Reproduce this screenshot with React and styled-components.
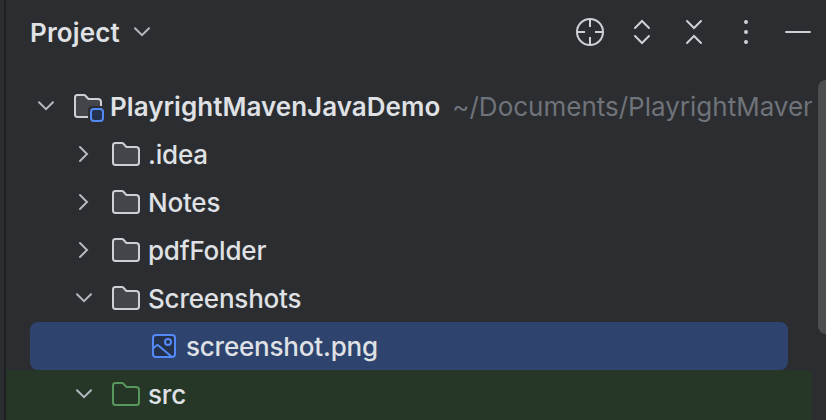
import styled, { createGlobalStyle } from "styled-components";

const GlobalStyle = createGlobalStyle`
  * {
    box-sizing: border-box;
  }
  body {
    margin: 0;
    background: #2b2d30;
    overflow: hidden;
  }
`;

const Window = styled.div`
  display: flex;
  width: 826px;
  height: 420px;
  overflow: hidden;
  background: #2b2d30;
  color: #dfe1e5;
  font-family: Inter, "Liberation Sans", sans-serif;
  font-size: 26px;
  line-height: 46px;
  white-space: nowrap;
`;

const Divider = styled.div`
  flex: none;
  width: 6px;
  border-left: 4px solid #2b2d30;
  background: #1e1f22;
`;

const ToolWindow = styled.div`
  flex: none;
  width: 820px;
`;

const Header = styled.div`
  display: flex;
  align-items: center;
  justify-content: space-between;
  height: 64px;
  padding: 0 12px 0 24px;
`;

const Title = styled.div`
  display: flex;
  align-items: center;
  gap: 6px;
  font-weight: 600;
  letter-spacing: 0.12px;

  span {
    padding-top: 2px;
  }
`;

const Toolbar = styled.div`
  display: flex;
  gap: 20px;
`;

const Content = styled.div`
  display: flex;
  padding-top: 16px;
`;

const Tree = styled.div`
  flex: none;
  width: 806px;
  margin-right: 6px;
  padding-top: 2px;
  overflow: hidden;
`;

const Row = styled.div`
  display: flex;
  align-items: center;
  height: 48px;
  padding-left: ${({ $level }) => 24 + $level * 38}px;
  background: ${({ $generated }) => ($generated ? "#263728" : "transparent")};
`;

const SelectedRow = styled(Row)`
  margin: 0 24px;
  padding-left: 118px;
  border-radius: 8px;
  background: #2e436e;
`;

const Label = styled.span`
  margin-left: 6px;
  padding-top: 2px;
  font-weight: ${({ $bold }) => ($bold ? 600 : 450)};
  letter-spacing: ${({ $bold }) => ($bold ? "0.03px" : "-0.2px")};
`;

const Location = styled.span`
  margin-left: 12px;
  padding-top: 2px;
  color: #6f737a;
`;

const Scrollbar = styled.div`
  flex: none;
  width: 16px;
  height: 254px;
  border-radius: 8px;
  background: #4c4d4f;
`;

const Icon = styled.svg`
  flex: none;
  width: 32px;
  height: 32px;
  fill: none;
  stroke: ${({ $color }) => $color || "#ced0d6"};
`;

const Arrow = styled(Icon)`
  margin-right: ${({ $gap }) => $gap || 0}px;
`;

const Badge = styled.rect`
  fill: #25324d;
  stroke: #548af7;
`;

const FOLDER =
  "M8.106 4.346L8.253 4.5H13C13.828 4.5 14.5 5.172 14.5 6V12.133C14.5 12.953 13.932 13.5 13.367 13.5H2.633C2.068 13.5 1.5 12.953 1.5 12.133V3.867C1.5 3.047 2.068 2.5 2.633 2.5H6.122C6.258 2.5 6.388 2.556 6.483 2.654L8.106 4.346Z";

const Chevron = ({ open, gap }) => (
  <Arrow viewBox="0 0 16 16" $gap={gap} $color="#b4b8bf">
    <path d={open ? "M4.5 6.1L8 9.6L11.5 6.1" : "M6 11.5L9.5 8L6 4.5"} strokeLinecap="round" />
  </Arrow>
);

const FolderIcon = ({ fill = "#43454a", stroke }) => (
  <Icon viewBox="0 0 16 16" $color={stroke}>
    <path d={FOLDER} fill={fill} />
  </Icon>
);

const ModuleIcon = () => (
  <Icon viewBox="0 0 16 16">
    <clipPath id="module-cut">
      <path d="M0 0H16V8H10C8.9 8 8 8.9 8 10V16H0Z" />
    </clipPath>
    <path d={FOLDER} fill="#43454a" clipPath="url(#module-cut)" />
    <Badge x="9.5" y="9.5" width="6" height="6" rx="1.5" />
  </Icon>
);

const ImageIcon = () => (
  <Icon viewBox="0 0 16 16" $color="#548af7">
    <rect x="2.5" y="2.5" width="11" height="11" rx="1.5" fill="#25324d" />
    <circle cx="10" cy="6" r="1.5" />
    <path d="M2.5 9.2L4.2 7.7C4.5 7.45 4.9 7.45 5.2 7.7L12 13.5" />
  </Icon>
);

const folders = [".idea", "Notes", "pdfFolder"];

const App = () => {
  return (
    <Window>
      <GlobalStyle />
      <Divider />
      <ToolWindow>
        <Header>
          <Title>
            <span>Project</span>
            <Chevron open />
          </Title>
          <Toolbar>
            <Icon viewBox="0 0 16 16">
              <circle cx="8" cy="8" r="6.5" />
              <path d="M8 1.5V5.5M8 10.5V14.5M1.5 8H5.5M10.5 8H14.5" />
            </Icon>
            <Icon viewBox="0 0 16 16">
              <path d="M4.5 6L8 2.5L11.5 6M4.5 10L8 13.5L11.5 10" strokeLinecap="round" />
            </Icon>
            <Icon viewBox="0 0 16 16">
              <path d="M4.5 2.5L8 6L11.5 2.5M4.5 13.5L8 10L11.5 13.5" strokeLinecap="round" />
            </Icon>
            <Icon viewBox="0 0 16 16">
              <g fill="#ced0d6" stroke="none">
                <circle cx="8" cy="3" r="1" />
                <circle cx="8" cy="8" r="1" />
                <circle cx="8" cy="13" r="1" />
              </g>
            </Icon>
            <Icon viewBox="0 0 16 16">
              <path d="M2 8H14" strokeLinecap="round" />
            </Icon>
          </Toolbar>
        </Header>
        <Content>
          <Tree>
            <Row $level={0}>
              <Chevron open gap={10} />
              <ModuleIcon />
              <Label $bold>PlayrightMavenJavaDemo</Label>
              <Location>~/Documents/PlayrightMavenJavaDemo</Location>
            </Row>
            {folders.map((name) => (
              <Row key={name} $level={1}>
                <Chevron gap={10} />
                <FolderIcon />
                <Label>{name}</Label>
              </Row>
            ))}
            <Row $level={1}>
              <Chevron open gap={10} />
              <FolderIcon />
              <Label>Screenshots</Label>
            </Row>
            <SelectedRow>
              <ImageIcon />
              <Label>screenshot.png</Label>
            </SelectedRow>
            <Row $level={1} $generated>
              <Chevron open gap={10} />
              <FolderIcon fill="#253627" stroke="#57965c" />
              <Label>src</Label>
            </Row>
            <Row $level={1} $generated />
          </Tree>
          <Scrollbar />
        </Content>
      </ToolWindow>
    </Window>
  );
};

export default App;
